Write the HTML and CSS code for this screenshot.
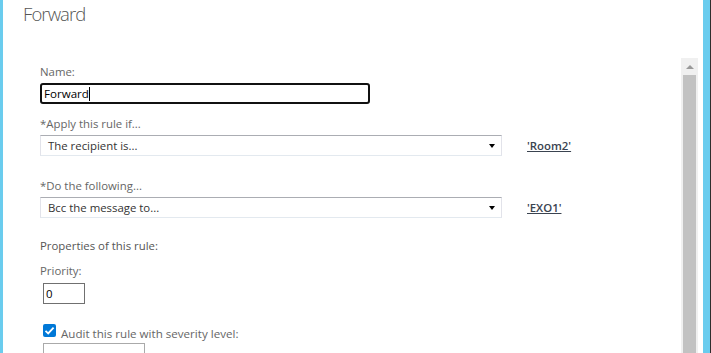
FILE: index.html
```html
<!DOCTYPE html>
<html>
<head>
<meta charset="utf-8">
<link rel="stylesheet" href="styles.css">
</head>
<body>
<div class="frame">
  <div class="header"><h1 class="title">Forward</h1></div>
  <div class="body">
    <div class="content">
      <div class="label first">Name:</div>
      <div class="name-input"><span class="name-text">Forward</span><span class="caret"></span></div>

      <div class="label apply">*Apply this rule if...</div>
      <div class="row">
        <div class="select"><span>The recipient is...</span><span class="arrow"></span></div>
        <a class="link">'Room2'</a>
      </div>

      <div class="label do">*Do the following...</div>
      <div class="row">
        <div class="select"><span>Bcc the message to...</span><span class="arrow"></span></div>
        <a class="link">'EXO1'</a>
      </div>

      <div class="label props">Properties of this rule:</div>
      <div class="label priority">Priority:</div>
      <div class="priority-input">0</div>

      <div class="check-row">
        <span class="checkbox"><svg width="13" height="13" viewBox="0 0 13 13"><path d="M2.5 6.8 L5.2 9.4 L10.6 3.6" fill="none" stroke="#fff" stroke-width="1.8"/></svg></span>
        <span class="check-label">Audit this rule with severity level:</span>
      </div>
      <div class="severity"></div>
    </div>
    <div class="scrollbar">
      <div class="scroll-btn"><span class="up"></span></div>
      <div class="thumb"></div>
    </div>
  </div>
</div>
</body>
</html>
```

FILE: styles.css
```css
html, body {
  margin: 0;
  padding: 0;
  background: #2e2e2e;
  overflow: hidden;
}
.frame {
  width: 710px;
  height: 353px;
  box-sizing: border-box;
  background: #fff;
  border-left: 3px solid #6accee;
  border-right: 7px solid #6accee;
  display: flex;
  flex-direction: column;
  font-family: "Open Sans", "Noto Sans", sans-serif;
  font-size: 11.4px;
  color: #666;
}
.header {
  height: 58px;
  padding-left: 20px;
  flex: none;
}
.title {
  margin: 0;
  font-weight: 300;
  font-size: 18.5px;
  letter-spacing: -0.9px;
  line-height: 28px;
  color: #555;
}
.body {
  flex: 1;
  display: flex;
  min-height: 0;
}
.content {
  flex: 1;
  padding-left: 37px;
  overflow: hidden;
}
.label {
  line-height: 16px;
  height: 16px;
}
.first { margin-top: 6px; }
.apply { margin-top: 12px; }
.do { margin-top: 22px; }
.props { margin-top: 20px; color: #555; }
.priority { margin-top: 9px; }
.name-input {
  margin-top: 3px;
  width: 330px;
  height: 21px;
  box-sizing: border-box;
  border: 2px solid #111;
  border-radius: 3px;
  padding-left: 2px;
  display: flex;
  align-items: center;
  color: #000;
  font-size: 11.6px;
}
.caret {
  width: 1px;
  height: 14px;
  background: #000;
}
.row {
  display: flex;
  align-items: center;
  margin-top: 3px;
}
.select {
  width: 462px;
  height: 21px;
  box-sizing: border-box;
  border: 1px solid #e2e3ea;
  border-top-color: #abadb3;
  border-bottom-color: #e3e9ef;
  display: flex;
  align-items: center;
  justify-content: space-between;
  padding: 0 6px 0 7px;
  color: #333;
}
.arrow {
  width: 0;
  height: 0;
  border-left: 3.5px solid transparent;
  border-right: 3.5px solid transparent;
  border-top: 4px solid #000;
}
.link {
  margin-left: 25px;
  color: #3a4350;
  font-weight: 600;
  text-decoration: underline;
}
.priority-input {
  margin-top: 4px;
  margin-left: 3px;
  width: 42px;
  height: 21px;
  box-sizing: border-box;
  border: 1px solid #707070;
  padding-left: 2px;
  line-height: 19px;
  color: #000;
}
.check-row {
  margin-top: 19px;
  margin-left: 3px;
  display: flex;
  align-items: flex-start;
  height: 17px;
}
.checkbox {
  width: 13px;
  height: 13px;
  background: #0078d7;
  border-radius: 2px;
  display: block;
  margin-top: 1px;
}
.checkbox svg { display: block; }
.check-label {
  margin-left: 5px;
  line-height: 18px;
  margin-top: 2px;
  font-size: 11.6px;
}
.severity {
  margin-top: 3px;
  margin-left: 3px;
  width: 102px;
  height: 21px;
  box-sizing: border-box;
  border: 1px solid #aaa;
}
.scrollbar {
  width: 17px;
  margin-right: 5px;
  background: #f0f0f0;
  display: flex;
  flex-direction: column;
  flex: none;
}
.scroll-btn {
  height: 17px;
  display: flex;
  align-items: center;
  justify-content: center;
}
.up {
  width: 0;
  height: 0;
  border-left: 4px solid transparent;
  border-right: 4px solid transparent;
  border-bottom: 4px solid #999;
}
.thumb {
  flex: 1;
  margin: 0 2px;
  background: #c2c2c2;
}
```
